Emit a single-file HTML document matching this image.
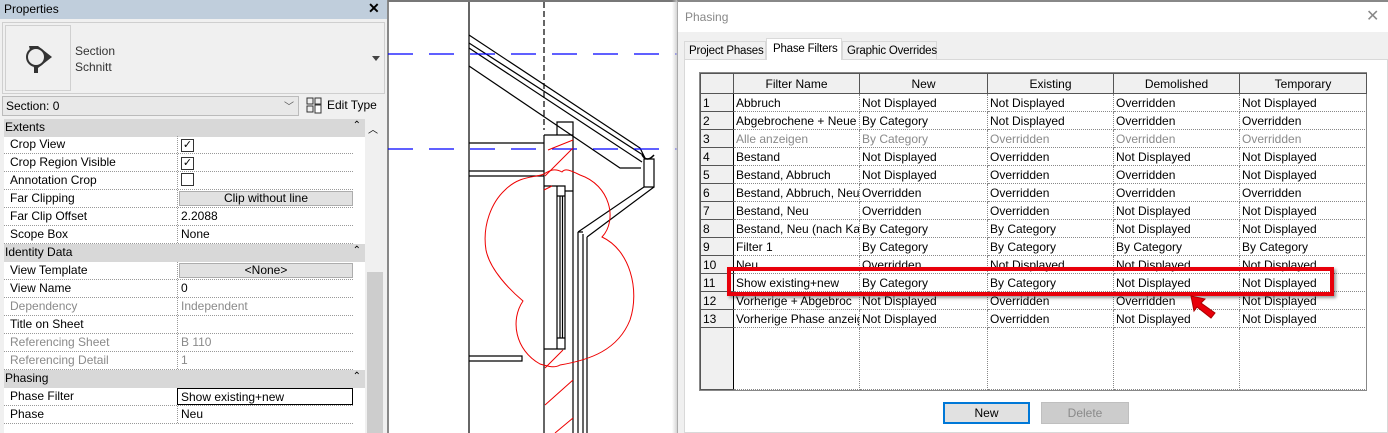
<!DOCTYPE html>
<html><head><meta charset="utf-8">
<style>
*{box-sizing:border-box;margin:0;padding:0}
body{width:1388px;height:433px;overflow:hidden;background:#fff;font-family:"Liberation Sans",sans-serif;font-size:12px;color:#000;position:relative}
.a{position:absolute;white-space:nowrap}
.pr{position:absolute;left:4px;width:349px;height:18px;border-bottom:1px dotted #999}
.pr .l{position:absolute;left:6px;top:1px}
.pr .v{position:absolute;left:173px;top:0;width:176px;height:17px;border-left:1px dotted #999;padding:1px 0 0 3px}
.gh{position:absolute;left:4px;width:361px;height:18px;background:#d8d8d8;padding:1px 0 0 1px}
.gh .c{position:absolute;right:4px;top:1px;font-size:10px}
.g{color:#8a8a8a}
table{border-collapse:collapse;table-layout:fixed}
td,th{height:18px;font-weight:normal;white-space:nowrap;overflow:hidden;padding:0 0 0 2px;border:1px dotted #888;text-align:left;line-height:16px}
th{height:20px;background:#f0f0f0;border:1px solid #555;text-align:center;padding:0}
td.n{background:#f0f0f0;border:1px solid #555;border-right:1.5px solid #000}
tr.d td{color:#8a8a8a}
.tab{font-size:11.5px;letter-spacing:-0.2px}
</style></head><body>
<div class="a" style="left:0;top:0;width:388px;height:433px;background:#f0f0f0"></div>
<div class="a" style="left:0;top:0;width:388px;height:19px;background:#c0cedc"></div>
<div class="a" style="left:4px;top:2px;font-size:12px">Properties</div>
<div class="a" style="left:368px;top:0;font-size:14px;font-weight:bold">✕</div>
<div class="a" style="left:2px;top:22px;width:383px;height:72px;border:1px solid #cfcfcf;background:#f0f0f0"></div>
<div class="a" style="left:5px;top:25px;width:66px;height:66px;border:1px solid #d0d0d0;background:#f0f0f0"></div>
<svg class="a" style="left:24px;top:40px" width="30" height="34"><path d="M5 6 L14 6 L28 17 L14 28 L14 33 L10 33 L10 28 Z" fill="#333"/><circle cx="12" cy="17" r="9" fill="#eee" stroke="#333" stroke-width="2"/></svg>
<div class="a" style="left:75px;top:44px;color:#333">Section</div>
<div class="a" style="left:75px;top:60px;color:#333">Schnitt</div>
<div class="a" style="left:372px;top:56px;border:4px solid transparent;border-top:5px solid #444"></div>
<div class="a" style="left:2px;top:96px;width:297px;height:20px;border:1px solid #bbb;background:#e8e8e8;padding:2px 0 0 3px">Section: 0</div>
<div class="a" style="left:284px;top:98px;font-size:10px;color:#555">﹀</div>
<svg class="a" style="left:306px;top:97px" width="17" height="17"><rect x="1" y="1" width="6" height="6" fill="none" stroke="#333"/><rect x="1" y="9" width="6" height="6" fill="none" stroke="#333"/><rect x="9" y="1" width="6" height="6" fill="none" stroke="#333"/><rect x="9" y="8" width="6" height="8" fill="#fff" stroke="#333"/></svg>
<div class="a" style="left:327px;top:98px">Edit Type</div>
<div class="a" style="left:4px;top:137px;width:361px;height:296px;background:#fff"></div>
<div class="a" style="left:365px;top:119px;width:20px;height:314px;background:#f0f0f0"></div>
<div class="a" style="left:367px;top:272px;width:16px;height:161px;background:#cdcdcd"></div>
<div class="a" style="left:368px;top:121px;font-size:10px">︿</div>
<div class="gh" style="top:119px">Extents<span class="c">⌃</span></div>
<div class="pr" style="top:136px"><span class="l">Crop View</span><span class="v"><span style="display:inline-block;width:13px;height:13px;border:1px solid #333;font-size:11px;line-height:11px;text-align:center">✓</span></span></div>
<div class="pr" style="top:154px"><span class="l">Crop Region Visible</span><span class="v"><span style="display:inline-block;width:13px;height:13px;border:1px solid #333;font-size:11px;line-height:11px;text-align:center">✓</span></span></div>
<div class="pr" style="top:172px"><span class="l">Annotation Crop</span><span class="v"><span style="display:inline-block;width:13px;height:13px;border:1px solid #333"></span></span></div>
<div class="pr" style="top:190px"><span class="l">Far Clipping</span><span class="v" style="padding:0"><span style="display:block;margin:1px 0 0 1px;height:15px;background:#e1e1e1;border:1px solid #adadad;text-align:center;line-height:13px">Clip without line</span></span></div>
<div class="pr" style="top:208px"><span class="l">Far Clip Offset</span><span class="v">2.2088</span></div>
<div class="pr" style="top:226px"><span class="l">Scope Box</span><span class="v">None</span></div>
<div class="gh" style="top:244px">Identity Data<span class="c">⌃</span></div>
<div class="pr" style="top:262px"><span class="l">View Template</span><span class="v" style="padding:0"><span style="display:block;margin:1px 0 0 1px;height:15px;background:#e1e1e1;border:1px solid #adadad;text-align:center;line-height:13px">&lt;None&gt;</span></span></div>
<div class="pr" style="top:280px"><span class="l">View Name</span><span class="v">0</span></div>
<div class="pr g" style="top:298px"><span class="l">Dependency</span><span class="v">Independent</span></div>
<div class="pr" style="top:316px"><span class="l">Title on Sheet</span><span class="v"></span></div>
<div class="pr g" style="top:334px"><span class="l">Referencing Sheet</span><span class="v">B 110</span></div>
<div class="pr g" style="top:352px"><span class="l">Referencing Detail</span><span class="v">1</span></div>
<div class="gh" style="top:370px">Phasing<span class="c">⌃</span></div>
<div class="pr" style="top:388px"><span class="l">Phase Filter</span><span class="v" style="border:1px solid #000;padding-top:1px">Show existing+new</span></div>
<div class="pr" style="top:406px"><span class="l">Phase</span><span class="v">Neu</span></div>
<div class="a" style="left:387px;top:0;width:2px;height:433px;background:#888"></div>
<div class="a" style="left:388px;top:0;width:290px;height:2px;background:#777"></div>
<svg class="a" style="left:0;top:0" width="680" height="433">
<g stroke="#000" stroke-width="1.2" fill="none">
<path d="M469 2V433"/>
<path d="M544 2V130" stroke-dasharray="6 3"/>
<path d="M544 135V433M573 122V433M557 122h16v13h-16zM544 135h29"/>
<path d="M469 35L640 148L645 158M469 43L643 155M469 48L642 162M469 66L620 168H641"/>
<path d="M469 143H544M469 171H544M469 176H544"/>
<path d="M544 186H557V349H544M557 186h8v163h-8zM557 196h8M557 338h8M560 196V338M562.5 196V338M565 191h8"/>
<path d="M644 159h10v28h-10zM644 187L578 232M654 187L587 237M578 232V433M583 234V433M587 237V433M578 232h5"/>
<path d="M469 356h53v5h-53"/>
<path d="M642 155q5 8 12 0" stroke-width="1.5"/>
</g>
<g stroke="#0000ff" stroke-width="1.3" stroke-dasharray="25 16"><path d="M388 54H680M388 149H680"/></g>
<g stroke="#e00" stroke-width="1" fill="none">
<path d="M544 174C535 178 520 175 505 190C492 202 482 225 486 250C490 270 510 290 523 301C510 320 515 350 540 364C550 367 555 368 560 365C590 360 618 350 630 320C640 290 630 250 602 237C618 220 610 185 580 175C570 170 565 168 562 172C555 168 550 170 544 174Z"/>
<path d="M548 150L573 140M545 176L573 148M545 368L563 350M545 405L573 380M555 433L573 418M544 190L552 186"/>
</g>
</svg>
<div class="a" style="left:672px;top:0;width:6px;height:433px;background:linear-gradient(90deg,#fff0,#ccc)"></div>
<div class="a" style="left:677px;top:0;width:711px;height:433px;background:#f0f0f0;border-left:1px solid #aaa;border-top:2px solid #888"></div>
<div class="a" style="left:678px;top:2px;width:710px;height:30px;background:#fff"></div>
<div class="a" style="left:685px;top:10px;color:#888">Phasing</div>
<div class="a" style="left:1366px;top:6px;color:#888;font-size:16px">✕</div>
<div class="a" style="left:684px;top:59px;width:704px;height:374px;background:#fff;border:1px solid #d9d9d9"></div>
<div class="a tab" style="left:684px;top:41px;width:82px;height:19px;border:1px solid #d9d9d9;background:#f0f0f0;padding:3px 0 0 4px">Project Phases</div>
<div class="a tab" style="left:766px;top:38px;width:76px;height:22px;border:1px solid #d9d9d9;border-bottom:none;background:#fff;padding:4px 0 0 6px">Phase Filters</div>
<div class="a tab" style="left:842px;top:41px;width:95px;height:19px;border:1px solid #d9d9d9;background:#f0f0f0;padding:3px 0 0 4px">Graphic Overrides</div>
<div class="a" style="left:699px;top:72px;width:668px;height:319px;border:1px solid #888;background:#fff"></div>
<table class="a" style="left:700px;top:73px;width:666px">
<colgroup><col style="width:33px"><col style="width:126px"><col style="width:128px"><col style="width:126px"><col style="width:126px"><col style="width:127px"></colgroup>
<tr><th></th><th>Filter Name</th><th>New</th><th>Existing</th><th>Demolished</th><th>Temporary</th></tr>
<tr><td class="n">1</td><td>Abbruch</td><td>Not Displayed</td><td>Not Displayed</td><td>Overridden</td><td>Not Displayed</td></tr>
<tr><td class="n">2</td><td>Abgebrochene + Neue</td><td>By Category</td><td>Not Displayed</td><td>Overridden</td><td>Overridden</td></tr>
<tr class="d"><td class="n" style="color:#000">3</td><td>Alle anzeigen</td><td>By Category</td><td>Overridden</td><td>Overridden</td><td>Overridden</td></tr>
<tr><td class="n">4</td><td>Bestand</td><td>Not Displayed</td><td>Overridden</td><td>Not Displayed</td><td>Not Displayed</td></tr>
<tr><td class="n">5</td><td>Bestand, Abbruch</td><td>Not Displayed</td><td>Overridden</td><td>Overridden</td><td>Not Displayed</td></tr>
<tr><td class="n">6</td><td>Bestand, Abbruch, Neu</td><td>Overridden</td><td>Overridden</td><td>Overridden</td><td>Overridden</td></tr>
<tr><td class="n">7</td><td>Bestand, Neu</td><td>Overridden</td><td>Overridden</td><td>Not Displayed</td><td>Not Displayed</td></tr>
<tr><td class="n">8</td><td>Bestand, Neu (nach Kat</td><td>By Category</td><td>By Category</td><td>Not Displayed</td><td>Not Displayed</td></tr>
<tr><td class="n">9</td><td>Filter 1</td><td>By Category</td><td>By Category</td><td>By Category</td><td>By Category</td></tr>
<tr><td class="n">10</td><td>Neu</td><td>Overridden</td><td>Not Displayed</td><td>Not Displayed</td><td>Not Displayed</td></tr>
<tr><td class="n">11</td><td>Show existing+new</td><td>By Category</td><td>By Category</td><td>Not Displayed</td><td>Not Displayed</td></tr>
<tr><td class="n">12</td><td>Vorherige + Abgebroc</td><td>Not Displayed</td><td>Overridden</td><td>Overridden</td><td>Not Displayed</td></tr>
<tr><td class="n">13</td><td>Vorherige Phase anzeig</td><td>Not Displayed</td><td>Overridden</td><td>Not Displayed</td><td>Not Displayed</td></tr>
<tr><td class="n" style="height:62px"></td><td></td><td></td><td></td><td></td><td></td></tr>
</table>
<div class="a" style="left:727px;top:267px;width:607px;height:29px;border:4px solid #e8000b;box-shadow:2px 2px 3px rgba(0,0,0,.4)"></div>
<svg class="a" style="left:1185px;top:290px" width="40" height="35"><path d="M6 6L20 9L16 13L30 23L26 28L12 17L9 21Z" fill="#e8000b" stroke="#a00" stroke-width="1"/></svg>
<div class="a" style="left:943px;top:402px;width:87px;height:22px;border:2px solid #0078d7;background:#e1e1e1;text-align:center;line-height:18px">New</div>
<div class="a" style="left:1041px;top:402px;width:88px;height:22px;border:1px solid #bfbfbf;background:#cccccc;color:#8a8a8a;text-align:center;line-height:20px">Delete</div>
</body></html>
